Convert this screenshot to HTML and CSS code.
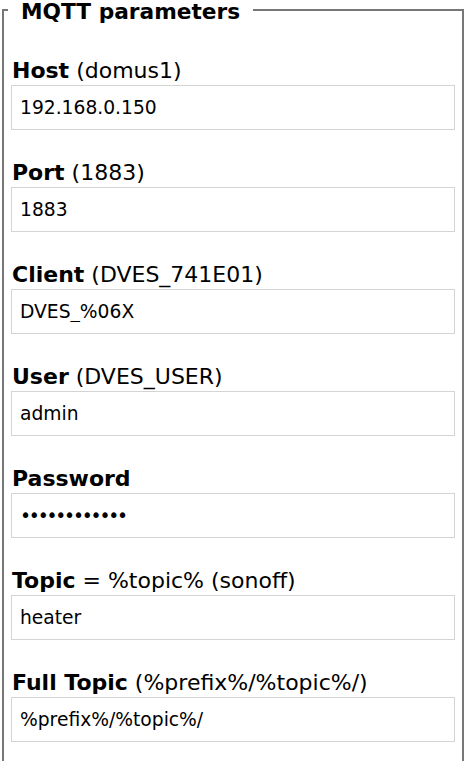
FILE: index.html
```html
<!DOCTYPE html>
<html>
<head>
<meta charset="utf-8">
<link rel="stylesheet" href="styles.css">
</head>
<body>
<fieldset class="mqtt">
  <legend class="title"><span class="title-text">MQTT parameters</span></legend>
  <div class="field">
    <div class="label"><b>Host</b> (domus1)</div>
    <input class="input" type="text" value="192.168.0.150">
  </div>
  <div class="field">
    <div class="label"><b>Port</b> (1883)</div>
    <input class="input" type="text" value="1883">
  </div>
  <div class="field">
    <div class="label"><b>Client</b> (DVES_741E01)</div>
    <input class="input" type="text" value="DVES_%06X">
  </div>
  <div class="field">
    <div class="label"><b>User</b> (DVES_USER)</div>
    <input class="input" type="text" value="admin">
  </div>
  <div class="field">
    <div class="label"><b>Password</b></div>
    <input class="input pw" type="password" value="passwordxyz1">
  </div>
  <div class="field">
    <div class="label"><b>Topic</b> = %topic% (sonoff)</div>
    <input class="input" type="text" value="heater">
  </div>
  <div class="field">
    <div class="label"><b>Full Topic</b> (%prefix%/%topic%/)</div>
    <input class="input" type="text" value="%prefix%/%topic%/">
  </div>
</fieldset>
</body>
</html>
```

FILE: styles.css
```css
html, body {
  margin: 0;
  padding: 0;
  background: #fff;
}
body {
  font-family: "DejaVu Sans", Verdana, sans-serif;
  color: #000;
}
.mqtt {
  margin: 0 0 0 2px;
  width: 462px;
  box-sizing: border-box;
  border: 2px solid #777;
  padding: 0 7px 0 7px;
  min-inline-size: 0;
}
.title {
  font-weight: bold;
  font-size: 21.7px;
  line-height: 20px;
  padding: 0 13px;
  margin-left: -3px;
}
.title-text {
  position: relative;
  top: 2px;
}
.field {
  display: flex;
  flex-direction: column;
  gap: 2px;
  margin-top: 30px;
}
.field:first-of-type {
  margin-top: 38px;
}
.field:last-child {
  margin-bottom: 30px;
}
.label {
  font-size: 22px;
  line-height: 25px;
  padding-left: 1px;
}
.input {
  box-sizing: border-box;
  width: 100%;
  height: 45px;
  margin: 0;
  border: 1px solid #d4d4d4;
  padding: 0 8px;
  font-family: "DejaVu Sans", Verdana, sans-serif;
  font-size: 18.7px;
  color: #000;
  background: #fff;
  outline: none;
}
.pw {
  letter-spacing: -2.2px;
}
```
